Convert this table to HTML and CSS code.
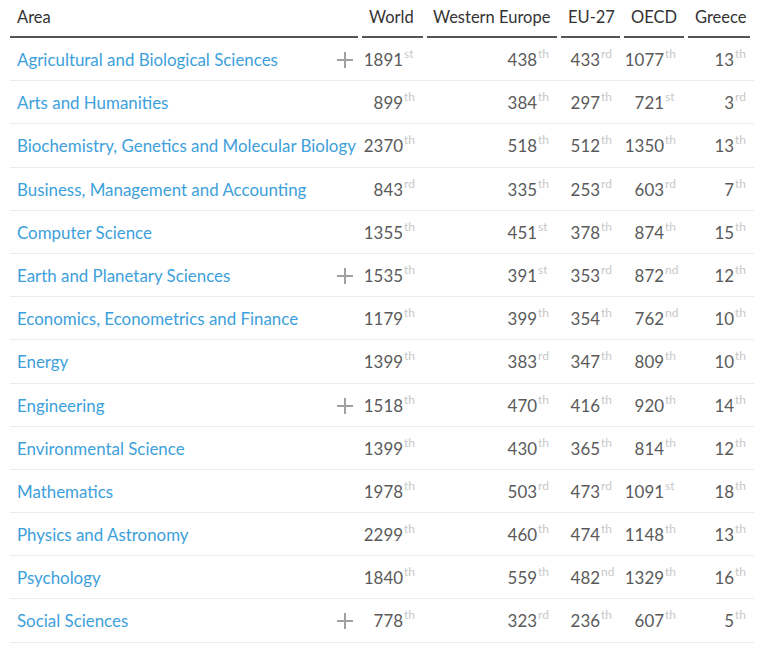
FILE: index.html
```html
<!DOCTYPE html>
<html>
<head>
<meta charset="utf-8">
<link rel="stylesheet" href="styles.css">
</head>
<body>
<table class="ranks">
  <colgroup>
    <col class="c-area"><col class="c-world"><col class="c-we"><col class="c-eu"><col class="c-oecd"><col class="c-gr">
  </colgroup>
  <thead>
    <tr><th>Area</th><th>World</th><th>Western Europe</th><th>EU-27</th><th>OECD</th><th>Greece</th></tr>
  </thead>
  <tbody>
    <tr><td class="area"><a>Agricultural and Biological Sciences</a><span class="plus"></span></td><td class="n">1891<sup>st</sup></td><td class="n">438<sup>th</sup></td><td class="n">433<sup>rd</sup></td><td class="n">1077<sup>th</sup></td><td class="n">13<sup>th</sup></td></tr>
    <tr><td class="area"><a>Arts and Humanities</a></td><td class="n">899<sup>th</sup></td><td class="n">384<sup>th</sup></td><td class="n">297<sup>th</sup></td><td class="n">721<sup>st</sup></td><td class="n">3<sup>rd</sup></td></tr>
    <tr><td class="area"><a>Biochemistry, Genetics and Molecular Biology</a></td><td class="n">2370<sup>th</sup></td><td class="n">518<sup>th</sup></td><td class="n">512<sup>th</sup></td><td class="n">1350<sup>th</sup></td><td class="n">13<sup>th</sup></td></tr>
    <tr><td class="area"><a>Business, Management and Accounting</a></td><td class="n">843<sup>rd</sup></td><td class="n">335<sup>th</sup></td><td class="n">253<sup>rd</sup></td><td class="n">603<sup>rd</sup></td><td class="n">7<sup>th</sup></td></tr>
    <tr><td class="area"><a>Computer Science</a></td><td class="n">1355<sup>th</sup></td><td class="n">451<sup>st</sup></td><td class="n">378<sup>th</sup></td><td class="n">874<sup>th</sup></td><td class="n">15<sup>th</sup></td></tr>
    <tr><td class="area"><a>Earth and Planetary Sciences</a><span class="plus"></span></td><td class="n">1535<sup>th</sup></td><td class="n">391<sup>st</sup></td><td class="n">353<sup>rd</sup></td><td class="n">872<sup>nd</sup></td><td class="n">12<sup>th</sup></td></tr>
    <tr><td class="area"><a>Economics, Econometrics and Finance</a></td><td class="n">1179<sup>th</sup></td><td class="n">399<sup>th</sup></td><td class="n">354<sup>th</sup></td><td class="n">762<sup>nd</sup></td><td class="n">10<sup>th</sup></td></tr>
    <tr><td class="area"><a>Energy</a></td><td class="n">1399<sup>th</sup></td><td class="n">383<sup>rd</sup></td><td class="n">347<sup>th</sup></td><td class="n">809<sup>th</sup></td><td class="n">10<sup>th</sup></td></tr>
    <tr><td class="area"><a>Engineering</a><span class="plus"></span></td><td class="n">1518<sup>th</sup></td><td class="n">470<sup>th</sup></td><td class="n">416<sup>th</sup></td><td class="n">920<sup>th</sup></td><td class="n">14<sup>th</sup></td></tr>
    <tr><td class="area"><a>Environmental Science</a></td><td class="n">1399<sup>th</sup></td><td class="n">430<sup>th</sup></td><td class="n">365<sup>th</sup></td><td class="n">814<sup>th</sup></td><td class="n">12<sup>th</sup></td></tr>
    <tr><td class="area"><a>Mathematics</a></td><td class="n">1978<sup>th</sup></td><td class="n">503<sup>rd</sup></td><td class="n">473<sup>rd</sup></td><td class="n">1091<sup>st</sup></td><td class="n">18<sup>th</sup></td></tr>
    <tr><td class="area"><a>Physics and Astronomy</a></td><td class="n">2299<sup>th</sup></td><td class="n">460<sup>th</sup></td><td class="n">474<sup>th</sup></td><td class="n">1148<sup>th</sup></td><td class="n">13<sup>th</sup></td></tr>
    <tr><td class="area"><a>Psychology</a></td><td class="n">1840<sup>th</sup></td><td class="n">559<sup>th</sup></td><td class="n">482<sup>nd</sup></td><td class="n">1329<sup>th</sup></td><td class="n">16<sup>th</sup></td></tr>
    <tr><td class="area"><a>Social Sciences</a><span class="plus"></span></td><td class="n">778<sup>th</sup></td><td class="n">323<sup>rd</sup></td><td class="n">236<sup>th</sup></td><td class="n">607<sup>th</sup></td><td class="n">5<sup>th</sup></td></tr>
  </tbody>
</table>
</body>
</html>
```
FILE: styles.css
```css
html, body {
  margin: 0;
  padding: 0;
  background: #fff;
}
body {
  font-family: "Lato", "Noto Sans", sans-serif;
  font-size: 16.9px;
  color: #5a5a5a;
}
.ranks {
  margin-left: 10px;
  width: 744px;
  border-collapse: collapse;
  table-layout: fixed;
}
.c-area { width: 352px; }
.c-world { width: 65px; }
.c-we { width: 134px; }
.c-eu { width: 63px; }
.c-oecd { width: 64px; }
.c-gr { width: 66px; }

.ranks th {
  text-align: left;
  font-weight: 400;
  font-size: 16.5px;
  color: #333;
  line-height: 24px;
  padding: 5px 0 9px 7px;
  background: linear-gradient(#555, #555) left bottom / calc(100% - 4px) 2px no-repeat;
  white-space: nowrap;
}
.ranks th:nth-child(3) { padding-left: 6px; }

.ranks td {
  line-height: 24px;
  padding: 10px 0 8.2px;
  border-bottom: 1px solid #ececec;
  white-space: nowrap;
}
.area {
  padding-left: 7px !important;
}
.area a {
  color: #3d9fdb;
  text-decoration: none;
}
.plus {
  float: right;
  position: relative;
  width: 16px;
  height: 16px;
  margin: 4px 9px 0 0;
}
.plus::before, .plus::after {
  content: "";
  position: absolute;
  background: #a0a0a0;
}
.plus::before { left: 0; right: 0; top: 7px; height: 2px; }
.plus::after { top: 0; bottom: 0; left: 7px; width: 2px; }

.n {
  text-align: right;
  padding-right: 10px !important;
}
.n:last-child {
  padding-right: 6px !important;
}
.n sup {
  display: inline-block;
  width: 13px;
  text-align: left;
  font-size: 12px;
  line-height: 1;
  color: #c8c8c8;
  vertical-align: 8px;
  margin-left: 1px;
}
```
